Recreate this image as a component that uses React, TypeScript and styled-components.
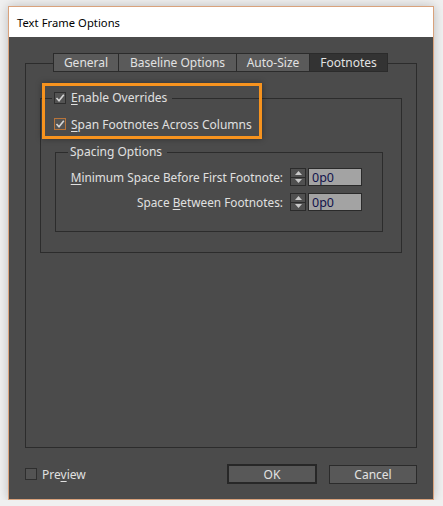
import React from 'react';
import styled, { createGlobalStyle } from 'styled-components';

const GlobalStyle = createGlobalStyle`
  html, body {
    margin: 0;
    padding: 0;
    background: #f0f0f0;
  }
  body {
    font-family: "Noto Sans", "Open Sans", sans-serif;
    font-size: 12px;
  }
`;

const Page = styled.div`
  padding: 6px 0 0 8px;
`;

const Window = styled.div`
  position: relative;
  width: 426px;
  height: 494px;
  box-sizing: border-box;
  border: 1px solid #d9a27c;
  background: #4b4b4b;
  box-shadow: 0 0 10px rgba(0, 0, 0, 0.22);
  display: flex;
  flex-direction: column;
`;

const TitleBar = styled.div`
  height: 30px;
  background: #fff;
  display: flex;
  align-items: center;
  padding-left: 8px;
  color: #000;
  font-size: 11.2px;
  letter-spacing: 0.05px;
`;

const Body = styled.div`
  flex: 1;
  padding: 26px 16px 0 16px;
  color: #e0e0e0;
`;

const Panel = styled.div`
  height: 385px;
  box-sizing: border-box;
  border: 1px solid #2c2c2c;
`;

const TabRow = styled.div`
  display: flex;
  margin: -11px 0 0 27px;
  height: 19px;
`;

const Tab = styled.div<{ $w: number; $active?: boolean }>`
  width: ${(p) => p.$w}px;
  box-sizing: border-box;
  border: 1px solid #2b2b2b;
  border-left-width: 0;
  &:first-child {
    border-left-width: 1px;
  }
  background: ${(p) => (p.$active ? '#333333' : '#5a5a5a')};
  color: #e2e2e2;
  display: flex;
  align-items: center;
  justify-content: center;
  line-height: 1;
`;

const Group = styled.fieldset<{ $w?: number }>`
  margin: 0;
  padding: 0;
  min-width: 0;
  border: 1px solid #2c2c2c;
  ${(p) => (p.$w ? `width: ${p.$w}px; box-sizing: border-box;` : '')}
`;

const OuterGroup = styled(Group)`
  margin: 18px 14px 0 14px;
  padding-bottom: 20px;
`;

const InnerGroup = styled(Group)`
  margin: 12px 0 0 14px;
  padding-bottom: 20px;
`;

const Legend = styled.legend<{ $ml: number }>`
  margin-left: ${(p) => p.$ml}px;
  padding: 0 5px 0 2px;
  line-height: 16px;
  color: #e0e0e0;
`;

const CheckRow = styled.label<{ $ml?: number; $mt?: number }>`
  display: flex;
  align-items: center;
  gap: 5px;
  height: 16px;
  margin: ${(p) => p.$mt ?? 0}px 0 0 ${(p) => p.$ml ?? 0}px;
  color: #e0e0e0;
`;

const Box = styled.span<{ $hot?: boolean }>`
  width: 12px;
  height: 12px;
  box-sizing: border-box;
  border: 1px solid ${(p) => (p.$hot ? '#b8743a' : '#2e2e2e')};
  background: #535353;
  display: flex;
  align-items: center;
  justify-content: center;
`;

const Mn = styled.u`
  text-decoration: underline;
  text-underline-offset: 2px;
`;

const Grid = styled.div`
  display: grid;
  grid-template-columns: 234px 16px 56px;
  row-gap: 7px;
  margin-top: 8px;
  align-items: center;
`;

const FieldLabel = styled.span`
  text-align: right;
  padding-right: 7px;
  color: #e0e0e0;
  font-size: 11.8px;
  white-space: nowrap;
`;

const Spinner = styled.div`
  width: 16px;
  height: 18px;
  display: flex;
  flex-direction: column;
`;

const SpinHalf = styled.div`
  flex: 1;
  box-sizing: border-box;
  border: 1px solid #2b2b2b;
  background: #505050;
  display: flex;
  align-items: center;
  justify-content: center;
  & + & {
    border-top: none;
  }
`;

const Field = styled.div`
  height: 18px;
  box-sizing: border-box;
  border: 1px solid #2a2a2a;
  background: #a3a3a3;
  color: #12124a;
  padding-left: 3px;
  display: flex;
  align-items: center;
  margin-left: 2px;
  font-size: 12.5px;
`;

const Footer = styled.div`
  display: flex;
  align-items: center;
  margin-top: 16px;
  height: 20px;
`;

const Spacer = styled.div`
  flex: 1;
`;

const Button = styled.div<{ $w: number; $def?: boolean }>`
  width: ${(p) => p.$w}px;
  height: ${(p) => (p.$def ? 20 : 19)}px;
  box-sizing: border-box;
  border: ${(p) => (p.$def ? '2px solid #272727' : '1px solid #2b2b2b')};
  background: #585858;
  color: #e2e2e2;
  display: flex;
  align-items: center;
  justify-content: center;
  & + & {
    margin-left: 12px;
  }
`;

const Highlight = styled.div`
  position: absolute;
  left: 33px;
  top: 76px;
  width: 220px;
  height: 56px;
  box-sizing: border-box;
  border: 3px solid #f7931e;
  box-shadow: 0 0 6px rgba(0, 0, 0, 0.35);
  pointer-events: none;
`;

const Check = () => (
  <svg width="10" height="10" viewBox="0 0 10 10">
    <path d="M1.5 5 L4 7.8 L8.8 1.8" fill="none" stroke="#d6d6d6" strokeWidth="1.6" />
  </svg>
);

const Arrow = ({ up }: { up?: boolean }) => (
  <svg width="7" height="4" viewBox="0 0 7 4">
    <path d={up ? 'M0 4 L3.5 0 L7 4 Z' : 'M0 0 L3.5 4 L7 0 Z'} fill="#c8c8c8" />
  </svg>
);

const Stepper = () => (
  <Spinner>
    <SpinHalf>
      <Arrow up />
    </SpinHalf>
    <SpinHalf>
      <Arrow />
    </SpinHalf>
  </Spinner>
);

const tabs = [
  { title: 'General', w: 66 },
  { title: 'Baseline Options', w: 118 },
  { title: 'Auto-Size', w: 73 },
  { title: 'Footnotes', w: 78, active: true },
];

const App: React.FC = () => {
  return (
    <Page>
      <GlobalStyle />
      <Window>
        <TitleBar>Text Frame Options</TitleBar>
        <Body>
          <Panel>
            <TabRow>
              {tabs.map((t) => (
                <Tab key={t.title} $w={t.w} $active={t.active}>
                  {t.title}
                </Tab>
              ))}
            </TabRow>
            <OuterGroup>
              <Legend $ml={11}>
                <CheckRow>
                  <Box>
                    <Check />
                  </Box>
                  <span>
                    <Mn>E</Mn>nable Overrides
                  </span>
                </CheckRow>
              </Legend>
              <CheckRow $ml={13} $mt={10}>
                <Box $hot>
                  <Check />
                </Box>
                <span>
                  <Mn>S</Mn>pan Footnotes Across Columns
                </span>
              </CheckRow>
              <InnerGroup $w={328}>
                <Legend $ml={12}>Spacing Options</Legend>
                <Grid>
                  <FieldLabel>
                    <Mn>M</Mn>inimum Space Before First Footnote:
                  </FieldLabel>
                  <Stepper />
                  <Field>0p0</Field>
                  <FieldLabel>
                    Space <Mn>B</Mn>etween Footnotes:
                  </FieldLabel>
                  <Stepper />
                  <Field>0p0</Field>
                </Grid>
              </InnerGroup>
            </OuterGroup>
          </Panel>
          <Footer>
            <CheckRow>
              <Box />
              <span>
                Pre<Mn>v</Mn>iew
              </span>
            </CheckRow>
            <Spacer />
            <Button $w={90} $def>
              OK
            </Button>
            <Button $w={88}>Cancel</Button>
          </Footer>
        </Body>
        <Highlight />
      </Window>
    </Page>
  );
};

export default App;
